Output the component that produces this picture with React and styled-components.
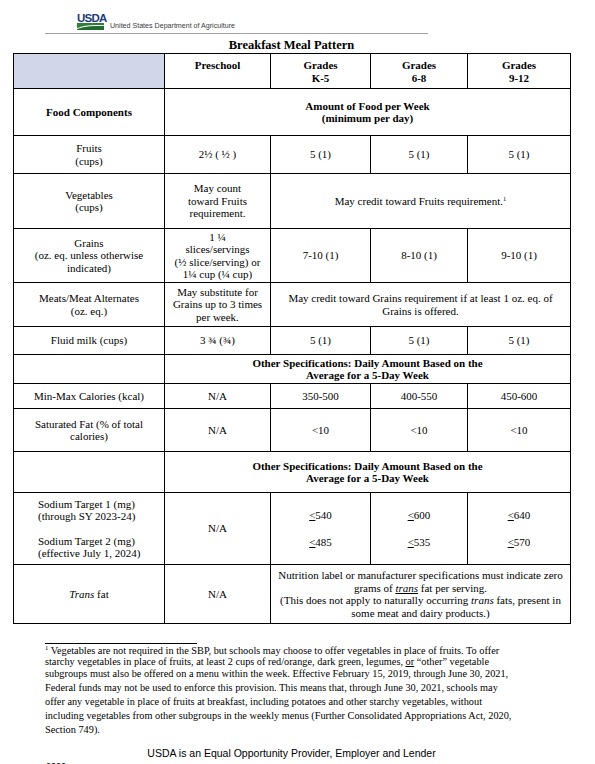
import styled, { createGlobalStyle } from "styled-components";

const serif = `"Liberation Serif", "Times New Roman", serif`;
const sans = `"Liberation Sans", Arial, sans-serif`;

const GlobalStyle = createGlobalStyle`
  html, body {
    margin: 0;
    padding: 0;
    background: #fff;
  }
  body {
    font-family: ${serif};
    color: #000;
  }
`;

const Page = styled.div`
  width: 595px;
  height: 764px;
  overflow: hidden;
  padding-top: 13px;
  box-sizing: border-box;
  font-family: ${serif};
`;

const Masthead = styled.div`
  margin-left: 45px;
  width: 383px;
  box-sizing: border-box;
  padding: 0 0 3px 32px;
  border-bottom: 1.5px solid #a3a3a3;
  display: flex;
  align-items: flex-end;
  gap: 6px;
`;

const Logo = styled.div`
  width: 27px;
  display: flex;
  flex-direction: column;
  align-items: stretch;
`;

const LogoWord = styled.span`
  font-family: ${sans};
  font-weight: bold;
  font-size: 11.5px;
  line-height: 10px;
  letter-spacing: -0.8px;
  color: #1d3b78;
`;

const Agency = styled.span`
  font-family: ${sans};
  font-size: 7.1px;
  line-height: 7px;
  color: #3a3a3a;
`;

const Title = styled.div`
  margin: 3px 0 0 13px;
  width: 557px;
  text-align: center;
  font-family: ${serif};
  font-weight: bold;
  font-size: 12.5px;
  line-height: 16px;
`;

const Table = styled.table`
  margin-left: 13px;
  width: 557px;
  border-collapse: collapse;
  table-layout: fixed;
  font-family: ${serif};
  font-size: 11px;
  line-height: 12.5px;
`;

const Row = styled.tr`
  height: ${(p) => p.$h}px;
`;

const Cell = styled.td`
  border: 1px solid #000;
  padding: 0 2px;
  font-family: ${serif};
  text-align: ${(p) => (p.$left ? "left" : "center")};
  padding-left: ${(p) => (p.$left ? "24px" : "2px")};
  padding-top: ${(p) => (p.$top ? "5px" : "0")};
  vertical-align: ${(p) => (p.$top ? "top" : "middle")};
  font-weight: ${(p) => (p.$bold ? "bold" : "normal")};
  background: ${(p) => (p.$shade ? "#cfd7e8" : "transparent")};
`;

const Sup = styled.sup`
  font-size: 6.5px;
  line-height: 0;
  vertical-align: 4px;
`;

const Under = styled.span`
  text-decoration: underline;
`;

const Em = styled.i``;

const SodiumCol = styled.div`
  display: flex;
  flex-direction: column;
  gap: ${(p) => p.$gap}px;
`;

const Footnotes = styled.div`
  margin: 19px 0 0 45px;
  width: 530px;
  font-family: ${serif};
  font-size: 10.3px;
`;

const FootRule = styled.div`
  width: 152px;
  border-top: 1px solid #000;
  margin-bottom: 1px;
`;

const FootLine = styled.div`
  white-space: nowrap;
  line-height: ${(p) => (p.$tight ? 11 : 14)}px;
`;

const Statement = styled.div`
  margin-top: 10px;
  margin-left: 13px;
  width: 557px;
  text-align: center;
  font-family: ${sans};
  font-size: 10.5px;
  line-height: 12px;
`;

const PageNum = styled.div`
  margin-left: 46px;
  font-family: ${sans};
  font-size: 9px;
  line-height: 10px;
  margin-top: 2px;
`;

const Swoosh = () => (
  <svg width="27" height="7" viewBox="0 0 27 7">
    <rect x="0" y="0" width="27" height="7" fill="#2e7d3a" />
    <path d="M0 5.2 C7 2.2 15 1.6 27 2.3 L27 3.1 C15 2.6 7 3.4 0 6.3 Z" fill="#fff" />
    <path d="M0 7 L0 6.3 C7 3.6 15 2.9 27 3.4 L27 7 Z" fill="#1f6b2f" />
  </svg>
);

const grades = [
  ["Grades", "K-5"],
  ["Grades", "6-8"],
  ["Grades", "9-12"],
];

export default function App() {
  return (
    <Page>
      <GlobalStyle />
      <Masthead>
        <Logo>
          <LogoWord>USDA</LogoWord>
          <Swoosh />
        </Logo>
        <Agency>United States Department of Agriculture</Agency>
      </Masthead>
      <Title>Breakfast Meal Pattern</Title>
      <Table>
        <colgroup>
          <col style={{ width: 151 }} />
          <col style={{ width: 106 }} />
          <col style={{ width: 100 }} />
          <col style={{ width: 97 }} />
          <col style={{ width: 103 }} />
        </colgroup>
        <tbody>
          <Row $h={35}>
            <Cell $shade />
            <Cell $bold $top>Preschool</Cell>
            {grades.map(([a, b]) => (
              <Cell key={b} $bold $top>
                {a}
                <br />
                {b}
              </Cell>
            ))}
          </Row>
          <Row $h={47}>
            <Cell $bold>Food Components</Cell>
            <Cell $bold colSpan={4}>
              Amount of Food per Week
              <br />
              (minimum per day)
            </Cell>
          </Row>
          <Row $h={38}>
            <Cell>
              Fruits
              <br />
              (cups)
            </Cell>
            <Cell>2½ ( ½ )</Cell>
            <Cell>5 (1)</Cell>
            <Cell>5 (1)</Cell>
            <Cell>5 (1)</Cell>
          </Row>
          <Row $h={55}>
            <Cell>
              Vegetables
              <br />
              (cups)
            </Cell>
            <Cell>
              May count
              <br />
              toward Fruits
              <br />
              requirement.
            </Cell>
            <Cell colSpan={3}>
              May credit toward Fruits requirement.<Sup>1</Sup>
            </Cell>
          </Row>
          <Row $h={54}>
            <Cell>
              Grains
              <br />
              (oz. eq. unless otherwise
              <br />
              indicated)
            </Cell>
            <Cell>
              1 ¼
              <br />
              slices/servings
              <br />
              (½ slice/serving) or
              <br />
              1¼ cup (¼ cup)
            </Cell>
            <Cell>7-10 (1)</Cell>
            <Cell>8-10 (1)</Cell>
            <Cell>9-10 (1)</Cell>
          </Row>
          <Row $h={44}>
            <Cell>
              Meats/Meat Alternates
              <br />
              (oz. eq.)
            </Cell>
            <Cell>
              May substitute for
              <br />
              Grains up to 3 times
              <br />
              per week.
            </Cell>
            <Cell colSpan={3}>
              May credit toward Grains requirement if at least 1 oz. eq. of
              <br />
              Grains is offered.
            </Cell>
          </Row>
          <Row $h={28}>
            <Cell>Fluid milk (cups)</Cell>
            <Cell>3 ¾ (¾)</Cell>
            <Cell>5 (1)</Cell>
            <Cell>5 (1)</Cell>
            <Cell>5 (1)</Cell>
          </Row>
          <Row $h={29}>
            <Cell />
            <Cell $bold colSpan={4}>
              Other Specifications: Daily Amount Based on the
              <br />
              Average for a 5-Day Week
            </Cell>
          </Row>
          <Row $h={25}>
            <Cell>Min-Max Calories (kcal)</Cell>
            <Cell>N/A</Cell>
            <Cell>350-500</Cell>
            <Cell>400-550</Cell>
            <Cell>450-600</Cell>
          </Row>
          <Row $h={43}>
            <Cell>
              Saturated Fat (% of total
              <br />
              calories)
            </Cell>
            <Cell>N/A</Cell>
            <Cell>&lt;10</Cell>
            <Cell>&lt;10</Cell>
            <Cell>&lt;10</Cell>
          </Row>
          <Row $h={41}>
            <Cell />
            <Cell $bold colSpan={4}>
              Other Specifications: Daily Amount Based on the
              <br />
              Average for a 5-Day Week
            </Cell>
          </Row>
          <Row $h={72}>
            <Cell $left>
              <SodiumCol $gap={12}>
                <div>
                  Sodium Target 1 (mg)
                  <br />
                  (through SY 2023-24)
                </div>
                <div>
                  Sodium Target 2 (mg)
                  <br />
                  (effective July 1, 2024)
                </div>
              </SodiumCol>
            </Cell>
            <Cell>N/A</Cell>
            {[
              ["540", "485"],
              ["600", "535"],
              ["640", "570"],
            ].map(([a, b]) => (
              <Cell key={a}>
                <SodiumCol $gap={14}>
                  <div>
                    <Under>&lt;</Under>
                    {a}
                  </div>
                  <div>
                    <Under>&lt;</Under>
                    {b}
                  </div>
                </SodiumCol>
              </Cell>
            ))}
          </Row>
          <Row $h={59}>
            <Cell>
              <Em>Trans</Em> fat
            </Cell>
            <Cell>N/A</Cell>
            <Cell colSpan={3}>
              Nutrition label or manufacturer specifications must indicate zero
              <br />
              grams of{" "}
              <Under>
                <Em>trans</Em>
              </Under>{" "}
              fat per serving.
              <br />
              (This does not apply to naturally occurring <Em>trans</Em> fats, present in
              <br />
              some meat and dairy products.)
            </Cell>
          </Row>
        </tbody>
      </Table>
      <Footnotes>
        <FootRule />
        <FootLine $tight>
          <Sup>1</Sup> Vegetables are not required in the SBP, but schools may choose to offer vegetables in place of fruits. To offer
        </FootLine>
        <FootLine $tight>
          starchy vegetables in place of fruits, at least 2 cups of red/orange, dark green, legumes, <Under>or</Under> “other” vegetable
        </FootLine>
        <FootLine>
          subgroups must also be offered on a menu within the week. Effective February 15, 2019, through June 30, 2021,
        </FootLine>
        <FootLine>
          Federal funds may not be used to enforce this provision. This means that, through June 30, 2021, schools may
        </FootLine>
        <FootLine>
          offer any vegetable in place of fruits at breakfast, including potatoes and other starchy vegetables, without
        </FootLine>
        <FootLine>
          including vegetables from other subgroups in the weekly menus (Further Consolidated Appropriations Act, 2020,
        </FootLine>
        <FootLine>Section 749).</FootLine>
      </Footnotes>
      <Statement>USDA is an Equal Opportunity Provider, Employer and Lender</Statement>
      <PageNum>2020</PageNum>
    </Page>
  );
}
